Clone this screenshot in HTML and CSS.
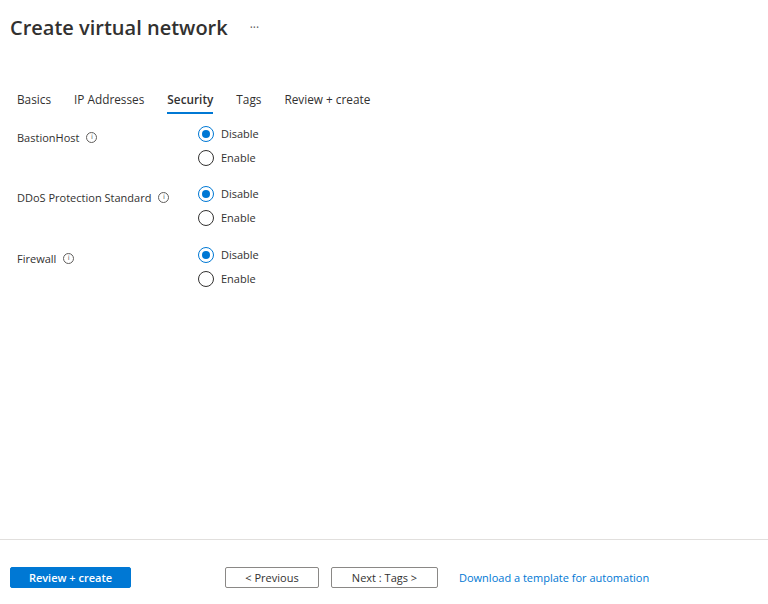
FILE: index.html
```html
<!DOCTYPE html>
<html>
<head>
<meta charset="utf-8">
<link rel="stylesheet" href="styles.css">
</head>
<body>
<div class="page">
  <main class="content">
    <header class="header">
      <h1 class="title">Create virtual network</h1>
      <span class="more">···</span>
    </header>
    <nav class="tabs">
      <span class="tab">Basics</span>
      <span class="tab">IP Addresses</span>
      <span class="tab active">Security</span>
      <span class="tab">Tags</span>
      <span class="tab">Review + create</span>
    </nav>
    <section class="form">
      <div class="row">
        <div class="label">BastionHost <span class="info">i</span></div>
        <div class="options">
          <label class="opt"><span class="radio on"></span>Disable</label>
          <label class="opt"><span class="radio"></span>Enable</label>
        </div>
      </div>
      <div class="row">
        <div class="label">DDoS Protection Standard <span class="info">i</span></div>
        <div class="options">
          <label class="opt"><span class="radio on"></span>Disable</label>
          <label class="opt"><span class="radio"></span>Enable</label>
        </div>
      </div>
      <div class="row">
        <div class="label">Firewall <span class="info">i</span></div>
        <div class="options">
          <label class="opt"><span class="radio on"></span>Disable</label>
          <label class="opt"><span class="radio"></span>Enable</label>
        </div>
      </div>
    </section>
  </main>
  <footer class="footer">
    <button class="btn primary">Review + create</button>
    <button class="btn secondary prev">&lt; Previous</button>
    <button class="btn secondary next">Next : Tags &gt;</button>
    <a class="link">Download a template for automation</a>
  </footer>
</div>
</body>
</html>
```
FILE: styles.css
```css
html, body {
  margin: 0;
  padding: 0;
  background: #ffffff;
}
body {
  font-family: "Open Sans", "Noto Sans", sans-serif;
  color: #323130;
}
.page {
  height: 604px;
  display: flex;
  flex-direction: column;
}
.content {
  flex: 1;
}
.header {
  display: flex;
  align-items: center;
  padding: 11px 0 0 10px;
  height: 32px;
}
.title {
  margin: 0;
  font-size: 20px;
  font-weight: 600;
  color: #323130;
}
.more {
  margin-left: 22px;
  font-size: 12px;
  color: #605e5c;
}
.tabs {
  display: flex;
  gap: 23px;
  padding: 47px 0 0 17px;
}
.tab {
  font-size: 11.8px;
  color: #323130;
  padding-bottom: 4px;
  border-bottom: 2px solid transparent;
  line-height: 18px;
}
.tab.active {
  font-weight: 600;
  border-bottom-color: #0078d4;
}
.form {
  padding: 11px 0 0 17px;
}
.row {
  display: grid;
  grid-template-columns: 181px 1fr;
  margin-bottom: 19px;
}
.row:last-child {
  padding-top: 1px;
}
.label {
  font-size: 11px;
  color: #323130;
  padding-top: 5px;
  display: flex;
  align-items: center;
  gap: 7px;
  height: 15px;
}
.info {
  display: inline-flex;
  align-items: center;
  justify-content: center;
  width: 9px;
  height: 9px;
  border: 1px solid #605e5c;
  border-radius: 50%;
  font-size: 7px;
  line-height: 1;
  color: #605e5c;
  font-family: "DejaVu Sans", sans-serif;
}
.options {
  display: flex;
  flex-direction: column;
  gap: 7px;
}
.opt {
  display: flex;
  align-items: center;
  gap: 7px;
  font-size: 11px;
  color: #323130;
  height: 17px;
}
.radio {
  box-sizing: border-box;
  width: 16px;
  height: 16px;
  border: 1px solid #323130;
  border-radius: 50%;
  display: inline-flex;
  align-items: center;
  justify-content: center;
}
.radio.on {
  border-color: #0078d4;
}
.radio.on::after {
  content: "";
  width: 8px;
  height: 8px;
  border-radius: 50%;
  background: #0078d4;
}
.footer {
  height: 65px;
  border-top: 1px solid #e1dfdd;
  display: flex;
  align-items: flex-start;
  padding: 27px 0 0 10px;
  box-sizing: border-box;
}
.btn {
  box-sizing: border-box;
  height: 21px;
  font-family: "Open Sans", "Noto Sans", sans-serif;
  font-size: 11px;
  border-radius: 2px;
  padding: 0;
  cursor: pointer;
}
.primary {
  width: 121px;
  background: #0078d4;
  border: 1px solid #0078d4;
  color: #ffffff;
  font-weight: 600;
}
.secondary {
  background: #ffffff;
  border: 1px solid #8a8886;
  color: #323130;
}
.prev {
  width: 94px;
  margin-left: 94px;
}
.next {
  width: 107px;
  margin-left: 12px;
}
.link {
  margin-left: 21px;
  font-size: 11px;
  color: #0078d4;
  line-height: 21px;
}
```
